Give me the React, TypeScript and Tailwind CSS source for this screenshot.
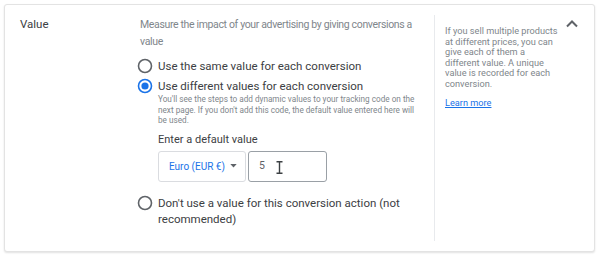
import React from "react";

function Radio({ checked }: { checked?: boolean }) {
  return (
    <svg width="16" height="16" viewBox="0 0 16 16" className="shrink-0">
      <circle
        cx="8"
        cy="8"
        r="6.5"
        fill="none"
        stroke={checked ? "#1a73e8" : "#5f6368"}
        strokeWidth="1.6"
      />
      {checked && <circle cx="8" cy="8" r="3.6" fill="#1a73e8" />}
    </svg>
  );
}

export default function App() {
  return (
    <div className="h-[258px] w-[600px] bg-white p-[4px] font-['Roboto',sans-serif]">
      <div className="flex h-[248px] w-[591px] rounded-[3px] border border-[#e3e3e3] bg-white shadow-[0_1px_2px_rgba(0,0,0,0.12)]">
        <div className="w-[135px] shrink-0 pl-[15px] pt-[11px] text-[11.5px] leading-[17px] text-[#3c4043]">
          Value
        </div>

        <div className="w-[280px] shrink-0 pt-[11px]">
          <p className="whitespace-nowrap text-[10.5px] leading-[17px] tracking-[-0.35px] text-[#80868b]">
            Measure the impact of your advertising by giving conversions a
            <br />
            value
          </p>

          <label className="-ml-[3px] mt-[7px] flex items-center gap-[5px] text-[11.5px] leading-[18px] text-[#3c4043]">
            <Radio />
            Use the same value for each conversion
          </label>

          <label className="-ml-[3px] mt-[3px] flex items-center gap-[5px] text-[11.5px] leading-[16px] text-[#3c4043]">
            <Radio checked />
            Use different values for each conversion
          </label>

          <div className="pl-[18px]">
            <p className="whitespace-nowrap text-[8.2px] leading-[10.5px] text-[#80868b]">
              You'll see the steps to add dynamic values to your tracking code on the
              <br />
              next page. If you don't add this code, the default value entered here will
              <br />
              be used.
            </p>
            <p className="mt-[6px] text-[11px] leading-[16px] text-[#3c4043]">Enter a default value</p>
            <div className="mt-[3px] flex gap-[2px]">
              <div className="flex h-[31px] w-[88px] items-center gap-[5px] rounded-[3px] border border-[#dadce0] pl-[10px] text-[10px] text-[#1a73e8]">
                Euro (EUR €)
                <svg width="7" height="4" viewBox="0 0 8 5">
                  <path d="M0 0h8L4 4.5z" fill="#5f6368" />
                </svg>
              </div>
              <div className="flex h-[31px] w-[79px] items-center rounded-[3px] border border-[#9aa0a6] pl-[10px] text-[10.5px] text-[#5f6368]">
                5
                <svg width="7" height="13" viewBox="0 0 7 13" className="ml-[11px] mt-[2px]">
                  <path d="M0.5 0.75h6M3.5 0.75v11.5M0.5 12.25h6" stroke="#3c4043" strokeWidth="1.4" fill="none" />
                </svg>
              </div>
            </div>
          </div>

          <label className="-ml-[3px] mt-[13px] flex items-start gap-[5px] text-[11.5px] leading-[16px] text-[#3c4043]">
            <Radio />
            <span>
              Don't use a value for this conversion action (not
              <br />
              recommended)
            </span>
          </label>
        </div>

        <div className="my-[10px] ml-[14px] flex flex-1 justify-between border-l border-[#e8eaed] pl-[10px] pr-[16px] pt-[11px]">
          <div className="whitespace-nowrap text-[9.2px] leading-[10.5px] text-[#80868b]">
            <p>
              If you sell multiple products
              <br />
              at different prices, you can
              <br />
              give each of them a
              <br />
              different value. A unique
              <br />
              value is recorded for each
              <br />
              conversion.
            </p>
            <a href="#" className="mt-[9px] block text-[#1a73e8] underline">
              Learn more
            </a>
          </div>
          <svg width="12" height="8" viewBox="0 0 12 8" className="mt-[-6px]">
            <path d="M1 6.5L6 1.5l5 5" stroke="#5f6368" strokeWidth="2" fill="none" />
          </svg>
        </div>
      </div>
    </div>
  );
}
